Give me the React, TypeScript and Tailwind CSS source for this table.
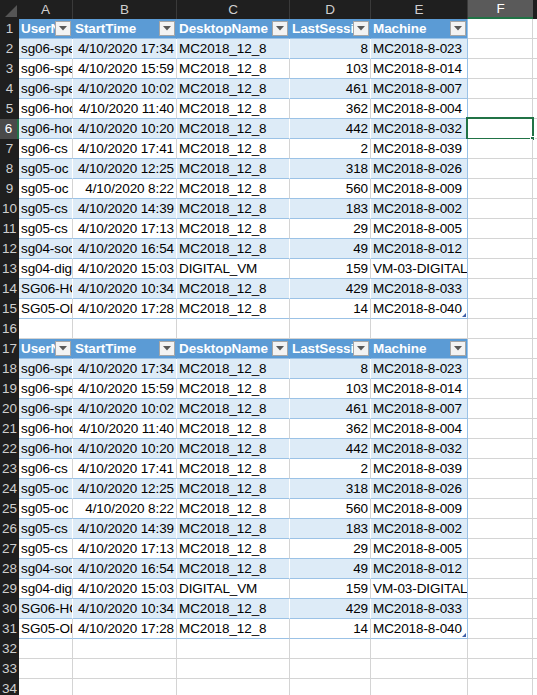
import React from 'react';

type Row = [string, string, string, string, string];

const data: Row[] = [
  ['sg06-spe', '4/10/2020 17:34', 'MC2018_12_8', '8', 'MC2018-8-023'],
  ['sg06-spe', '4/10/2020 15:59', 'MC2018_12_8', '103', 'MC2018-8-014'],
  ['sg06-spe', '4/10/2020 10:02', 'MC2018_12_8', '461', 'MC2018-8-007'],
  ['sg06-hoc', '4/10/2020 11:40', 'MC2018_12_8', '362', 'MC2018-8-004'],
  ['sg06-hoc', '4/10/2020 10:20', 'MC2018_12_8', '442', 'MC2018-8-032'],
  ['sg06-cs', '4/10/2020 17:41', 'MC2018_12_8', '2', 'MC2018-8-039'],
  ['sg05-oc', '4/10/2020 12:25', 'MC2018_12_8', '318', 'MC2018-8-026'],
  ['sg05-oc', '4/10/2020 8:22', 'MC2018_12_8', '560', 'MC2018-8-009'],
  ['sg05-cs', '4/10/2020 14:39', 'MC2018_12_8', '183', 'MC2018-8-002'],
  ['sg05-cs', '4/10/2020 17:13', 'MC2018_12_8', '29', 'MC2018-8-005'],
  ['sg04-soc', '4/10/2020 16:54', 'MC2018_12_8', '49', 'MC2018-8-012'],
  ['sg04-dig', '4/10/2020 15:03', 'DIGITAL_VM', '159', 'VM-03-DIGITAL'],
  ['SG06-HC', '4/10/2020 10:34', 'MC2018_12_8', '429', 'MC2018-8-033'],
  ['SG05-Ol', '4/10/2020 17:28', 'MC2018_12_8', '14', 'MC2018-8-040'],
];

const headers = ['UserN', 'StartTime', 'DesktopName', 'LastSessio', 'Machine'];
const widths = ['w-[54px]', 'w-[104px]', 'w-[113px]', 'w-[81px]', 'w-[97px]'];

function RowNum({ n, active = false }: { n: number; active?: boolean }) {
  return (
    <div
      className={
        active
          ? 'w-[19px] h-[20px] shrink-0 flex items-center justify-center bg-[#4a4a4a] text-white border-r-2 border-[#217346]'
          : 'w-[19px] h-[20px] shrink-0 flex items-center justify-center bg-[#1f1f1f] text-[#cfcfcf]'
      }
    >
      {n}
    </div>
  );
}

function DropBtn() {
  return (
    <div className="w-[16px] h-[15px] shrink-0 bg-[#f3f3f3] border border-[#a6a6a6] flex items-center justify-center">
      <svg width="8" height="5" viewBox="0 0 8 5">
        <path d="M0 0 H8 L4 4.5 Z" fill="#595959" />
      </svg>
    </div>
  );
}

function HeaderRow({ n }: { n: number }) {
  return (
    <div className="flex">
      <RowNum n={n} />
      {headers.map((h, i) => (
        <div
          key={h}
          className={`${widths[i]} h-[20px] shrink-0 flex items-center bg-[#5b9bd5] border-b border-[#9bc2e6] ${i === 4 ? 'border-r border-r-[#9bc2e6]' : 'border-r border-r-[#5b9bd5]'} pl-[2px] pr-[1px]`}
        >
          <span className="flex-1 overflow-hidden whitespace-nowrap font-bold text-white">{h}</span>
          <DropBtn />
        </div>
      ))}
      <div className="w-[65px] h-[20px] shrink-0 bg-white border-r border-b border-[#d4d4d4]" />
      <div className="flex-1 h-[20px] bg-white border-b border-[#d4d4d4]" />
    </div>
  );
}

function DataRow({ n, row, band, last, active }: { n: number; row: Row; band: boolean; last: boolean; active?: boolean }) {
  const bg = band ? 'bg-[#ddebf7]' : 'bg-white';
  const vline = band ? 'border-r-white' : 'border-r-[#d4d4d4]';
  return (
    <div className="flex">
      <RowNum n={n} active={active} />
      {row.map((v, i) => (
        <div
          key={i}
          className={`${widths[i]} h-[20px] shrink-0 relative flex items-center overflow-hidden whitespace-nowrap border-b border-[#9bc2e6] border-r ${i === 4 ? 'border-r-[#9bc2e6]' : vline} ${bg} ${i === 1 || i === 3 ? 'justify-end pr-[2px]' : 'pl-[2px]'} text-black`}
        >
          {v}
          {last && i === 4 && (
            <div className="absolute right-[1px] bottom-[1px] w-0 h-0 border-l-[4px] border-l-transparent border-b-[4px] border-b-[#3d5fa8]" />
          )}
        </div>
      ))}
      <div className="w-[65px] h-[20px] shrink-0 relative bg-white border-r border-b border-[#d4d4d4]">
        {active && (
          <div className="absolute -left-[2px] -top-[2px] w-[68px] h-[23px] border-2 border-[#217346]">
            <div className="absolute -right-[3px] -bottom-[3px] w-[5px] h-[5px] bg-[#217346] border border-white" />
          </div>
        )}
      </div>
      <div className="flex-1 h-[20px] bg-white border-b border-[#d4d4d4]" />
    </div>
  );
}

function EmptyRow({ n }: { n: number }) {
  return (
    <div className="flex">
      <RowNum n={n} />
      {widths.map((w, i) => (
        <div key={i} className={`${w} h-[20px] shrink-0 bg-white border-r border-b border-[#d4d4d4]`} />
      ))}
      <div className="w-[65px] h-[20px] shrink-0 bg-white border-r border-b border-[#d4d4d4]" />
      <div className="flex-1 h-[20px] bg-white border-b border-[#d4d4d4]" />
    </div>
  );
}

export default function App() {
  const letters = ['A', 'B', 'C', 'D', 'E'];
  return (
    <div
      className="w-[537px] h-[695px] overflow-hidden bg-white text-[13.5px] leading-none tracking-[-0.1px]"
      style={{ fontFamily: '"Liberation Sans", Arial, sans-serif' }}
    >
      {/* column letters */}
      <div className="flex h-[19px] bg-[#1f1f1f] text-[#cfcfcf]">
        <div className="w-[19px] h-full shrink-0 relative">
          <div className="absolute right-[2px] bottom-[2px] w-0 h-0 border-l-[12px] border-l-transparent border-b-[12px] border-b-[#555555]" />
        </div>
        {letters.map((l, i) => (
          <div key={l} className={`${widths[i]} h-full shrink-0 flex items-center justify-center border-r border-[#3a3a3a]`}>
            {l}
          </div>
        ))}
        <div className="w-[65px] h-full shrink-0 flex items-center justify-center bg-[#5a5a5a] text-white border-b-2 border-[#217346]">
          F
        </div>
        <div className="flex-1 h-full" />
      </div>

      <HeaderRow n={1} />
      {data.map((r, i) => (
        <DataRow key={i} n={i + 2} row={r} band={i % 2 === 0} last={i === data.length - 1} active={i + 2 === 6} />
      ))}
      <EmptyRow n={16} />
      <HeaderRow n={17} />
      {data.map((r, i) => (
        <DataRow key={'b' + i} n={i + 18} row={r} band={i % 2 === 0} last={i === data.length - 1} />
      ))}
      <EmptyRow n={32} />
      <EmptyRow n={33} />
      <EmptyRow n={34} />
    </div>
  );
}
